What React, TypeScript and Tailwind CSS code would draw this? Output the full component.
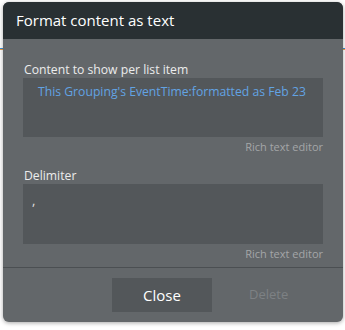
import React from 'react';

const font = { fontFamily: '"Open Sans", "Noto Sans", sans-serif' };

const Field: React.FC<{ label: string; height: string; children?: React.ReactNode }> = ({ label, height, children }) => (
  <div className="flex flex-col">
    <label className="text-[12.2px] leading-4 text-[#ececec] pl-px">{label}</label>
    <div className={`${height} bg-[#53575a] px-[15px] py-[6px]`}>{children}</div>
    <div className="mt-[2px] text-right text-[11px] leading-4 text-[#a3a6a8]">Rich text editor</div>
  </div>
);

export default function App() {
  return (
    <div className="relative w-[345px] h-[330px] bg-white overflow-hidden" style={font}>
      {/* page behind the dialog */}
      <div className="absolute left-0 right-0 top-[48px] h-px bg-[#3b8fd9]" />
      <div className="absolute left-0 right-0 top-[49px] h-px bg-[#f0a040]" />

      <div className="relative ml-[3px] mt-[2px] w-[340px] h-[320px] rounded-[6px] overflow-hidden bg-[#63676a] shadow-[0_1px_4px_rgba(0,0,0,0.35)] flex flex-col">
        <div className="h-[37px] bg-[#293033] flex items-center px-[13px]">
          <span className="text-[15px] text-white">Format content as text</span>
        </div>

        <div className="flex flex-col px-[20px] pt-[23px]">
          <Field label="Content to show per list item" height="h-[59px]">
            <div className="text-[12.2px] leading-4 text-[#62a3e3] whitespace-nowrap">This Grouping's EventTime:formatted as Feb 23</div>
          </Field>
          <div className="mt-[13px]">
            <Field label="Delimiter" height="h-[60px]">
              <div className="text-[13px] leading-4 text-[#e0e0e0] -ml-[6px] pt-[2px]">,</div>
            </Field>
          </div>
        </div>

        <div className="mt-[5px] h-px bg-[#4b4f52]" />

        <div className="flex items-center pt-[10px] pl-[109px]">
          <button className="w-[100px] h-[34px] bg-[#53575a] text-[15px] text-white">Close</button>
          <button className="ml-[37px] text-[13px] text-[#7d8184]">Delete</button>
        </div>
      </div>
    </div>
  );
}
